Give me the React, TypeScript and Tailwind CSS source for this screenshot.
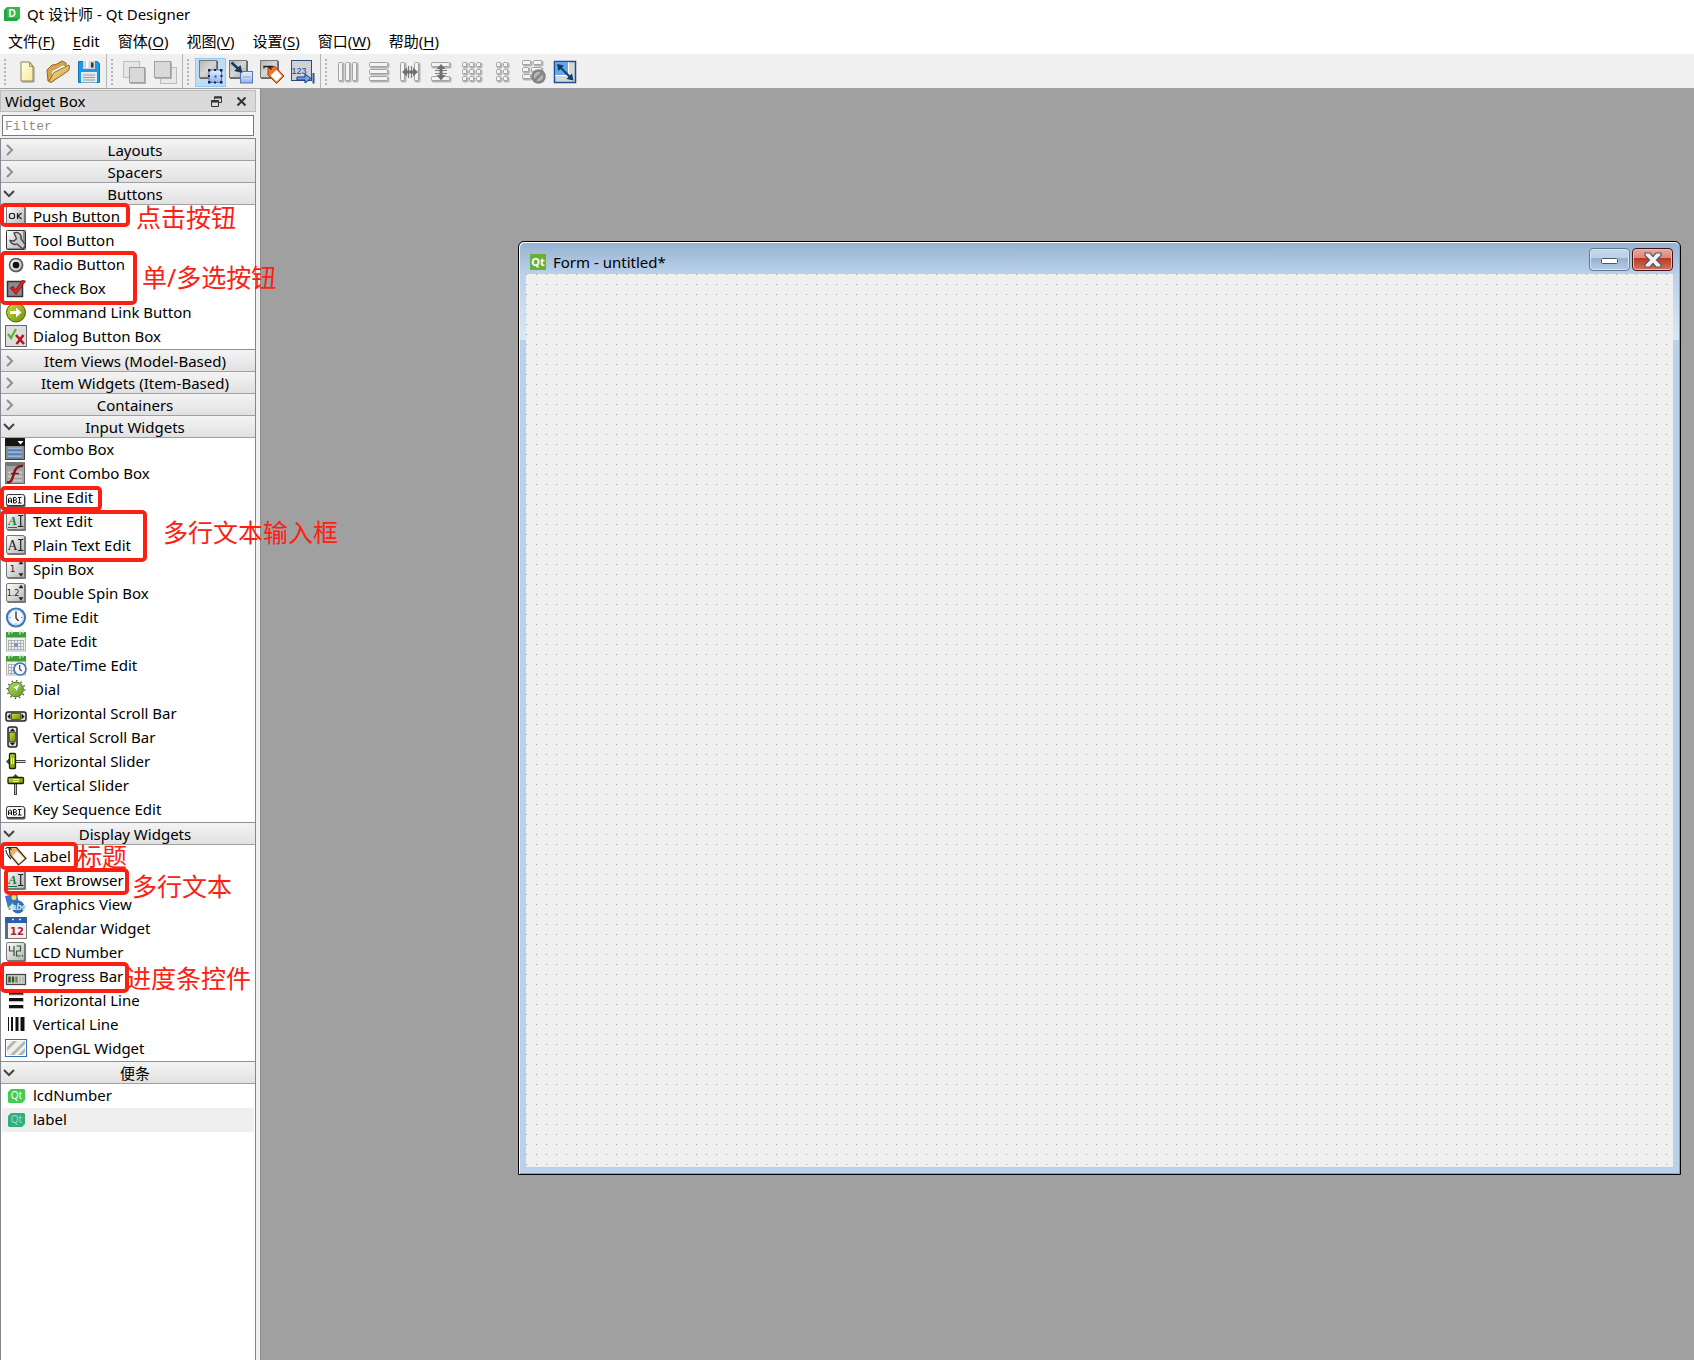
import React from "react";

type Kids = { children?: React.ReactNode };

const Svg = ({ children, size = 22 }: Kids & { size?: number }) => (
  <svg width={size} height={size} viewBox={`0 0 ${size} ${size}`} aria-hidden="true" className="block shrink-0">
    {children}
  </svg>
);

const Defs = () => (
  <svg width="0" height="0" className="absolute" aria-hidden="true">
    <defs>
      <linearGradient id="metal" x1="0" y1="0" x2="1" y2="1">
        <stop offset="0" stopColor="#ffffff" />
        <stop offset="1" stopColor="#b4b4b4" />
      </linearGradient>
      <linearGradient id="plate" x1="0" y1="0" x2="1" y2="1">
        <stop offset="0" stopColor="#b4b4b4" />
        <stop offset="0.5" stopColor="#d6d6d6" />
        <stop offset="1" stopColor="#a8a8a8" />
      </linearGradient>
      <linearGradient id="lime" x1="0" y1="0" x2="1" y2="1">
        <stop offset="0" stopColor="#c6e03c" />
        <stop offset="1" stopColor="#6f8f08" />
      </linearGradient>
      <linearGradient id="knob" x1="0" y1="0" x2="1" y2="1">
        <stop offset="0" stopColor="#b5dc62" />
        <stop offset="1" stopColor="#5f9a1e" />
      </linearGradient>
      <linearGradient id="paper" x1="0" y1="0" x2="1" y2="1">
        <stop offset="0" stopColor="#fffef2" />
        <stop offset="1" stopColor="#fbe98e" />
      </linearGradient>
      <linearGradient id="folder" x1="0" y1="0" x2="1" y2="1">
        <stop offset="0" stopColor="#fbe9a6" />
        <stop offset="1" stopColor="#d09a2c" />
      </linearGradient>
      <linearGradient id="sky" x1="0" y1="0" x2="0" y2="1">
        <stop offset="0" stopColor="#e4efff" />
        <stop offset="1" stopColor="#8fb4ec" />
      </linearGradient>
    </defs>
  </svg>
);

/* ---------- widget icons ---------- */

const Key = ({ children }: Kids) => (
  <>
    <rect x="2" y="2" width="19" height="19" rx="1.5" fill="#777" />
    <rect x="1.5" y="1.5" width="18" height="18" rx="1.5" fill="url(#metal)" stroke="#777" />
    {children}
  </>
);

const Glyph = ({ x, y, s, c = "#222", f = "Liberation Sans", b, i, children }: Kids & { x: number; y: number; s: number; c?: string; f?: string; b?: boolean; i?: boolean }) => (
  <text x={x} y={y} fontSize={s} fill={c} fontFamily={`"${f}", sans-serif`} fontWeight={b ? 700 : 400} fontStyle={i ? "italic" : "normal"} textAnchor="middle">
    {children}
  </text>
);

const PushIcon = () => (
  <Svg>
    <Key>
      <path d="M5.500 8.500h3l1 1v3l-1 1h-3l-1-1v-3zM12.500 8v6M16.500 8l-3.500 3 3.500 3" fill="none" stroke="#222" strokeWidth="1.200" />
    </Key>
  </Svg>
);

const ToolIcon = () => (
  <Svg>
    <rect x="1.500" y="1.500" width="19" height="19" rx="1" fill="#8a8a8a" stroke="#333" />
    <rect x="2" y="2" width="16" height="17" fill="url(#metal)" />
    <path d="M9 4a5 5 0 0 1 7 6l4.500 6-2.500 4-6-5a5 5 0 0 1-7-3.500l4 .5 2.500-2.500z" fill="#c9c9c9" stroke="#444" strokeWidth="1.300" />
  </Svg>
);

const RadioIcon = () => (
  <Svg>
    <circle cx="11.500" cy="12.500" r="7" fill="#aaa" />
    <circle cx="11" cy="12" r="6.500" fill="url(#metal)" stroke="#555" strokeWidth="1.500" />
    <circle cx="11" cy="12" r="3.300" fill="#111" />
  </Svg>
);

const CheckIcon = () => (
  <Svg>
    <rect x="2.500" y="4.500" width="15" height="15" fill="#8c8c8c" stroke="#333" strokeWidth="1.500" />
    <path d="M5 11l3.500-1.500 2 3.500 6.500-9.500 3.500.5-9.500 13.500z" fill="#d8262c" stroke="#7d0c10" strokeWidth="0.800" />
  </Svg>
);

const CommandIcon = () => (
  <Svg>
    <circle cx="11" cy="11.500" r="9.500" fill="url(#lime)" stroke="#4b5a14" />
    <path d="M5 10h6V6.500l5.500 5-5.500 5V13H5z" fill="#fff" />
  </Svg>
);

const DialogIcon = () => (
  <Svg>
    <rect x="0.500" y="0.500" width="21" height="21" fill="#dedede" stroke="#666" />
    <path d="M3 9l3 4 5-9" fill="none" stroke="#57b52b" strokeWidth="2.200" />
    <path d="M11 10l8 9M18.500 10l-7 9" stroke="#b8141c" strokeWidth="2.600" />
  </Svg>
);

const ComboIcon = () => (
  <Svg>
    <rect x="0.500" y="0.500" width="19" height="21" fill="#8b8b8b" stroke="#444" />
    <rect x="0" y="0" width="20" height="8" fill="#161616" />
    <path d="M12.500 3h6l-3 3.500z" fill="#fff" />
    <path d="M3 10.500h14M3 14.500h14M3 18.500h14" stroke="#8db8ec" strokeWidth="2" />
    <path d="M3 12h14M3 16h14M3 20h14" stroke="#355f99" strokeWidth="0.700" />
  </Svg>
);

const FontComboIcon = () => (
  <Svg>
    <rect x="0.500" y="0.500" width="19" height="21" fill="#a3a3a3" stroke="#666" />
    <rect x="0" y="0" width="20" height="4" fill="#777" />
    <path d="M3 10.500h14M3 14.500h14M3 18.500h14" stroke="#c9c9c9" strokeWidth="2" />
    <path d="M2 20c4 1 5-2 6.500-7S11 3.500 18 4" fill="none" stroke="#8e1116" strokeWidth="2.500" />
    <path d="M6 11.500h8" stroke="#8e1116" strokeWidth="1.500" />
  </Svg>
);

const LineEditIcon = () => (
  <Svg>
    <rect x="1.500" y="9.500" width="19" height="12" rx="2" fill="#555" />
    <rect x="1.500" y="8.500" width="18" height="11" rx="2" fill="#f4f4f4" stroke="#333" />
    <path d="M3.500 17v-4l1-1h1l1 1v4M3.500 15h3M8.500 11.500v5.500h2l1-1v-1l-1-.8h-2M10.500 14.200l.8-.7v-1.200l-.8-.8h-2M13 11.500h1.500v5.500H13M16.500 11.500h-2M16.500 17h-2" fill="none" stroke="#111" strokeWidth="1" />
  </Svg>
);

const Cursor = () => <path d="M13 5.500h2l.7.7.7-.7h2M13 16.500h2l.7-.7.7.7h2M15.700 6v10" fill="none" stroke="#222" strokeWidth="1.200" />;

const TextEditIcon = () => (
  <Svg>
    <Key>
      <Glyph x={7.500} y={15} s={13} i c="#1d7a2c" f="Liberation Serif" b>A</Glyph>
      <path d="M3 17.500h9" stroke="#1d7a2c" />
      <Cursor />
    </Key>
  </Svg>
);

const PlainTextIcon = () => (
  <Svg>
    <Key>
      <Glyph x={7.500} y={16} s={14} f="Liberation Serif">A</Glyph>
      <Cursor />
    </Key>
  </Svg>
);

const Arrows = () => <path d="M14 6l2-3 2 3zM14 15.500l2 3 2-3z" fill="#222" stroke="#222" strokeWidth="0.500" />;
const SpinIcon = () => <Svg><Key><Glyph x={7.500} y={14} s={9} f="DejaVu Sans">1</Glyph><Arrows /></Key></Svg>;
const DoubleSpinIcon = () => <Svg><Key><Glyph x={8} y={14} s={8} f="DejaVu Sans">1.2</Glyph><Arrows /></Key></Svg>;

const ClockIcon = () => (
  <Svg>
    <circle cx="11" cy="11.500" r="9" fill="#f4f7fb" stroke="#3b78bf" strokeWidth="2.200" />
    <circle cx="11" cy="11.500" r="7.300" fill="none" stroke="#b9cfe8" strokeWidth="0.800" />
    <path d="M11 5.500v6.500l2.500 3" fill="none" stroke="#333" strokeWidth="1.300" />
    <path d="M11 17v1.500M4.500 11.500H6M16 11.500h1.500" stroke="#888" strokeWidth="0.900" />
  </Svg>
);

const CalendarBase = () => (
  <>
    <rect x="1.500" y="3.500" width="19" height="17.500" fill="#efefef" stroke="#b5b5b5" />
    <rect x="1" y="2" width="20" height="5.500" fill="#3c9e34" />
    <path d="M4 4.500v-3a1.500 1.500 0 0 1 3 0v2M15 4.500v-3a1.500 1.500 0 0 1 3 0v2" fill="none" stroke="#d9e8d7" strokeWidth="1.300" />
    <path d="M3 10.500h16M3 13.500h16M3 16.500h16M3 19.500h16M3.500 10v10M6.500 10v10M9.500 10v10M12.500 10v10M15.500 10v10M18.500 10v10" stroke="#a6a6a6" strokeWidth="0.800" />
  </>
);

const DateIcon = () => <Svg><CalendarBase /><rect x="9.500" y="13.500" width="3" height="3" fill="#5a8de0" /></Svg>;
const DateTimeIcon = () => (
  <Svg>
    <CalendarBase />
    <circle cx="15" cy="15" r="6" fill="#f6f9fc" stroke="#3b78bf" strokeWidth="1.700" />
    <path d="M14.700 11v4.200l2 2" fill="none" stroke="#333" strokeWidth="1.100" />
  </Svg>
);

const DialIcon = () => (
  <Svg>
    <circle cx="11" cy="11.500" r="8.800" fill="none" stroke="#444" strokeWidth="1.600" strokeDasharray="1.200 3.400" />
    <circle cx="11" cy="11.500" r="7.400" fill="url(#knob)" stroke="#4f7a1b" />
    <path d="M14.500 6.500l-3 6.500-1-2.500-2.500-1z" fill="#fff" />
  </Svg>
);

const HScrollIcon = () => (
  <Svg>
    <rect x="1" y="10" width="20" height="9" rx="2" fill="#ddd" stroke="#222" strokeWidth="1.500" />
    <rect x="6.500" y="11.500" width="9" height="6" fill="url(#lime)" stroke="#42510f" strokeWidth="0.800" />
    <path d="M5.500 11.500v6l-3-3zM16.500 11.500v6l3-3z" fill="#111" />
  </Svg>
);

const VScrollIcon = () => (
  <Svg>
    <rect x="3" y="1" width="9" height="20" rx="2" fill="#ddd" stroke="#222" strokeWidth="1.500" />
    <rect x="4.500" y="6.500" width="6" height="9" fill="url(#lime)" stroke="#42510f" strokeWidth="0.800" />
    <path d="M4.500 5.500h6l-3-3zM4.500 16.500h6l-3 3z" fill="#111" />
  </Svg>
);

const HSliderIcon = () => (
  <Svg>
    <path d="M1 11.500l3-3v6zM4 10h16.500v3H4z" fill="#444" />
    <path d="M5 11.500h15" stroke="#ddd" />
    <rect x="4.500" y="3.500" width="6" height="15" rx="1" fill="url(#lime)" stroke="#1d2405" strokeWidth="1.300" />
    <path d="M6.500 8v6M8.500 8v6" stroke="#f2f7cf" />
  </Svg>
);

const VSliderIcon = () => (
  <Svg>
    <path d="M10.500 0l3 3h-6zM9 3h3v18H9z" fill="#444" />
    <path d="M10.500 4v16" stroke="#bbb" />
    <rect x="3" y="3.500" width="15.500" height="6" rx="1" fill="url(#lime)" stroke="#1d2405" strokeWidth="1.300" />
    <path d="M8 5.500h6M8 7.500h6" stroke="#f2f7cf" />
  </Svg>
);

const LabelIcon = () => (
  <Svg>
    <path d="M4 2.500l7.500 0L21 13.500 13.500 20 5 10z" fill="#f0b168" stroke="#3b2a16" strokeWidth="1.200" />
    <path d="M12 6.500l7.500 7-5.500 5L7.500 11z" fill="#fff" />
    <path d="M0.500 4c2-2.500 4-2 6 1M1 5c0 4 2 6 5 9" fill="none" stroke="#222" strokeWidth="1.100" />
  </Svg>
);

const GraphicsIcon = () => (
  <Svg>
    <path d="M0 3l12-2.500 2 10-11 5z" fill="#3d73d8" />
    <path d="M3 13l5-4 6 1-2 4-8 3z" fill="#3b9b3d" />
    <circle cx="9" cy="4.500" r="2.500" fill="#f4dd45" />
    <circle cx="13" cy="14" r="6.500" fill="#336fae" />
    <path d="M3 15l5-5 2 7z" fill="#cfe2fa" />
    <Glyph x={14} y={17} s={9} b i c="#dbe8f6">abc</Glyph>
  </Svg>
);

const CalendarWidgetIcon = () => (
  <Svg>
    <rect x="0.500" y="0.500" width="21" height="21" fill="#f1f1f1" stroke="#777" />
    <rect x="0" y="0" width="22" height="6" fill="#2d5da8" />
    <rect x="0" y="6" width="3" height="16" fill="#5c6c85" />
    <path d="M7 2.500h2M14 2.500h2" stroke="#dce8fa" strokeWidth="1.500" />
    <Glyph x={12} y={18} s={10} b c="#b3222a" f="DejaVu Sans">12</Glyph>
  </Svg>
);

const LcdIcon = () => (
  <Svg>
    <Key>
      <path d="M4.500 5v5h4.500M9 5v10M11.500 5h4v5h-4v5h4M17.500 14v1.500" fill="none" stroke="#2d5a35" strokeWidth="1.200" />
    </Key>
  </Svg>
);

const ProgressIcon = () => (
  <Svg>
    <rect x="1.500" y="9.500" width="19" height="10" fill="#d6d6d6" stroke="#444" strokeWidth="1.300" />
    <path d="M4.500 11.500v6M8 11.500v6" stroke="#33581c" strokeWidth="2.500" />
    <path d="M11.500 11.500v6" stroke="#6e8a5d" strokeWidth="2.500" />
    <path d="M15 11.500v6M18 11.500v6" stroke="#a9b5a2" strokeWidth="1.500" />
  </Svg>
);

const HLineIcon = () => <Svg><path d="M4 4.500h15M4 11h15M4 18h15" stroke="#bbb" strokeWidth="4" /><path d="M4 4h14M4 10.500h14M4 17.500h14" stroke="#111" strokeWidth="3" /></Svg>;
const VLineIcon = () => (
  <Svg>
    <path d="M3.500 4v14" stroke="#111" />
    <path d="M7 4v14" stroke="#111" strokeWidth="2" />
    <path d="M12 4v14" stroke="#111" strokeWidth="3" />
    <path d="M17.500 4v14" stroke="#111" strokeWidth="4" />
  </Svg>
);

const OpenGLIcon = () => (
  <Svg>
    <rect x="0.500" y="2.500" width="21" height="17" fill="#fff" stroke="#2f6fc0" />
    <path d="M2 4h18v14H2z" fill="#f0f0ea" />
    <path d="M2 10l6-6h4L2 14zM5 18L19 4h1v3L9 18zM13 18l7-7v4l-3 3z" fill="#b5b5b5" />
  </Svg>
);

const QtLeaf = ({ tone, ink }: { tone: string; ink: string }) => (
  <Svg>
    <path d="M6 5h13l1 1v10l-3 3H4l-1-1V8z" fill={tone} />
    <Glyph x={11.500} y={15} s={10} c={ink} f="Noto Sans">Qt</Glyph>
  </Svg>
);

/* ---------- toolbar icons ---------- */

const NewIcon = () => (
  <Svg size={24}>
    <path d="M6 2h8.500l3.500 4v15H6z" fill="url(#paper)" stroke="#8f8150" />
    <path d="M14.500 2v4.500h3.500z" fill="#f0df95" stroke="#8f8150" strokeWidth="0.800" />
    <path d="M7 22h12V7" fill="none" stroke="#777" strokeWidth="0.800" />
  </Svg>
);

const OpenIcon = () => (
  <Svg size={24}>
    <path d="M1 10l5-5 4-.5 6-3.500 4 2v6L6 22l-4-1z" fill="#d9a640" stroke="#8a6a20" />
    <path d="M6 11l11-6 3 1-3 8-12 6z" fill="#fff" stroke="#9c9c9c" strokeWidth="0.700" />
    <path d="M3 21.500l5-9 15-7.500c.8 2 .3 5-1 6L5 22.500z" fill="url(#folder)" stroke="#8a6a20" />
  </Svg>
);

const SaveIcon = () => (
  <Svg size={24}>
    <path d="M1.500 1.500h19l2 2v19h-21z" fill="#1a9be6" stroke="#0f76bd" />
    <rect x="6" y="1" width="12" height="8" fill="#d6d6d6" />
    <rect x="9" y="1" width="2.500" height="7" fill="#fff" />
    <rect x="14" y="2.500" width="2.500" height="5" fill="#333" />
    <rect x="4" y="12" width="16" height="10.500" fill="#e8e8e8" />
    <path d="M6 15h12M6 17.500h12M6 20h12" stroke="#999" />
  </Svg>
);

const BackIcon = () => (
  <Svg size={24}>
    <rect x="1.500" y="1.500" width="16" height="16" fill="#e6e6e6" stroke="#bdbdbd" />
    <rect x="8" y="8" width="16" height="16" fill="#b0b0b0" />
    <rect x="7.500" y="7.500" width="15" height="15" fill="#d9d9d9" stroke="#a0a0a0" />
  </Svg>
);

const FrontIcon = () => (
  <Svg size={24}>
    <rect x="7.500" y="7.500" width="16" height="16" fill="#e9e9e9" stroke="#bdbdbd" />
    <rect x="2" y="2" width="17" height="17" fill="#b0b0b0" />
    <rect x="1.500" y="1.500" width="16" height="16" fill="#d9d9d9" stroke="#a0a0a0" />
  </Svg>
);

const Plate = () => (
  <>
    <rect x="1" y="1" width="18" height="18" fill="#666" />
    <rect x="0.500" y="0.500" width="17" height="17" fill="url(#plate)" stroke="#777" />
  </>
);

const EditWidgetsIcon = () => (
  <Svg size={24}>
    <Plate />
    <rect x="10" y="10" width="12.500" height="12.500" fill="url(#sky)" stroke="#5d78b0" strokeWidth="1" />
    <path d="M9 9h2.500v2.500H9zM15 9h2v2h-2zM21 9h2.500v2.500H21zM9 15h2v2H9zM21.500 15h2v2h-2zM9 21h2.500v2.500H9zM15 21.500h2v2h-2zM21 21h2.500v2.500H21z" fill="#15234f" />
    <rect x="15.500" y="15.500" width="2" height="2" fill="#244ba0" />
  </Svg>
);

const SignalsIcon = () => (
  <Svg size={24}>
    <Plate />
    <rect x="11.500" y="11.500" width="12" height="11.500" fill="url(#sky)" stroke="#5878ac" />
    <path d="M14 17h7" stroke="#fff" strokeWidth="2.500" />
    <path d="M14 17h7" stroke="#5a7cb8" />
    <path d="M2.500 2.500l7.500 7" stroke="#173d60" strokeWidth="2.500" />
    <path d="M13.500 13l-8.500-2 6.500-6z" fill="#173d60" />
  </Svg>
);

const BuddiesIcon = () => (
  <Svg size={24}>
    <Plate />
    <path d="M8 7.500l7-1L24 16l-7.500 7.500-8.500-8.500z" fill="#f17627" stroke="#9f3c0c" />
    <path d="M16.500 10l5.500 6-5.500 5.500-6-6z" fill="#fff" />
    <path d="M4 8.500V6.500h9M8.500 6.500l3 3" fill="none" stroke="#222" strokeWidth="1.300" />
  </Svg>
);

const TabOrderIcon = () => (
  <Svg size={24}>
    <rect x="0.500" y="0.500" width="20" height="20" fill="#d2d2d2" stroke="#2d4c7c" />
    <Glyph x={8} y={14} s={9} c="#1c3f94">123</Glyph>
    <path d="M6 17h8v-3l6 4.500-6 4.500v-3H6z" fill="#6ba5f0" stroke="#173d78" />
    <path d="M22.500 13v10.500" stroke="#2456a4" strokeWidth="2" />
  </Svg>
);

const Cell = ({ x, y, w, h }: { x: number; y: number; w: number; h: number }) => (
  <>
    <rect x={x + 1} y={y + 1} width={w + 1} height={h + 1} rx="1" fill="#b4b4b4" stroke="#b4b4b4" />
    <rect x={x + 0.5} y={y + 0.5} width={w} height={h} rx="1" fill="#f4f4f4" stroke="#a2a2a2" />
  </>
);

const LayHIcon = () => <Svg size={24}><Cell x={2} y={2} w={4} h={18} /><Cell x={9} y={2} w={4} h={18} /><Cell x={16} y={2} w={4} h={18} /></Svg>;
const LayVIcon = () => <Svg size={24}><Cell x={2} y={2} w={18} h={4} /><Cell x={2} y={9} w={18} h={4} /><Cell x={2} y={16} w={18} h={4} /></Svg>;
const SplitHIcon = () => (
  <Svg size={24}>
    <Cell x={2} y={2} w={4} h={18} /><Cell x={16} y={2} w={4} h={18} />
    <path d="M10.500 6v12M13.500 6v12" stroke="#7d7d7d" strokeWidth="1.200" />
    <path d="M4 12l5-4.500v3h6v-3l5 4.500-5 4.500v-3H9v3z" fill="#707070" />
  </Svg>
);
const SplitVIcon = () => (
  <Svg size={24}>
    <Cell x={2} y={2} w={18} h={4} /><Cell x={2} y={16} w={18} h={4} />
    <path d="M6 10.500h12M6 13.500h12" stroke="#7d7d7d" strokeWidth="1.200" />
    <path d="M12 4l4.500 5h-3v6h3L12 20.500 7.500 15h3V9h-3z" fill="#707070" />
  </Svg>
);
const LayGridIcon = () => (
  <Svg size={24}>
    {[2, 9, 16].map((y) => [2, 9, 16].map((x) => <Cell key={`${x}-${y}`} x={x} y={y} w={4} h={4} />))}
  </Svg>
);
const LayFormIcon = () => (
  <Svg size={24}>
    {[2, 9, 16].map((y) => [5, 12].map((x) => <Cell key={`${x}-${y}`} x={x} y={y} w={4} h={4} />))}
  </Svg>
);
const BreakIcon = () => (
  <Svg size={24}>
    <Cell x={0} y={0} w={8} h={4} /><Cell x={11} y={0} w={8} h={4} />
    <Cell x={0} y={7} w={6} h={4} /><Cell x={9} y={7} w={10} h={4} />
    <Cell x={0} y={14} w={8} h={4} />
    <circle cx="16.500" cy="16.500" r="6" fill="#b5b5b5" stroke="#858585" strokeWidth="2.500" />
    <path d="M12.500 20.500l8-8" stroke="#858585" strokeWidth="2.500" />
  </Svg>
);
const AdjustIcon = () => (
  <Svg size={24}>
    <rect x="1.500" y="1.500" width="21" height="21" fill="#d7d7d7" stroke="#1d4e8f" strokeWidth="1.500" />
    <rect x="2" y="2" width="13" height="13" fill="#62a8ea" />
    <path d="M2 15.500h13.500V2" fill="none" stroke="#fff" />
    <path d="M7 7l10 10" stroke="#0c3f66" strokeWidth="2" />
    <path d="M4 4l7 1.500L5.500 11zM20.500 20.500L13.500 19l5.500-5.500z" fill="#0c3f66" />
  </Svg>
);

/* ---------- data ---------- */

type Item = { name: string; icon: React.ReactNode; on?: boolean };
type Section = { title: string; items?: Item[]; last?: boolean };

const sections: Section[] = [
  { title: "Layouts" },
  { title: "Spacers" },
  {
    title: "Buttons",
    items: [
      { name: "Push Button", icon: <PushIcon /> },
      { name: "Tool Button", icon: <ToolIcon /> },
      { name: "Radio Button", icon: <RadioIcon /> },
      { name: "Check Box", icon: <CheckIcon /> },
      { name: "Command Link Button", icon: <CommandIcon /> },
      { name: "Dialog Button Box", icon: <DialogIcon /> },
    ],
  },
  { title: "Item Views (Model-Based)" },
  { title: "Item Widgets (Item-Based)" },
  { title: "Containers" },
  {
    title: "Input Widgets",
    items: [
      { name: "Combo Box", icon: <ComboIcon /> },
      { name: "Font Combo Box", icon: <FontComboIcon /> },
      { name: "Line Edit", icon: <LineEditIcon /> },
      { name: "Text Edit", icon: <TextEditIcon /> },
      { name: "Plain Text Edit", icon: <PlainTextIcon /> },
      { name: "Spin Box", icon: <SpinIcon /> },
      { name: "Double Spin Box", icon: <DoubleSpinIcon /> },
      { name: "Time Edit", icon: <ClockIcon /> },
      { name: "Date Edit", icon: <DateIcon /> },
      { name: "Date/Time Edit", icon: <DateTimeIcon /> },
      { name: "Dial", icon: <DialIcon /> },
      { name: "Horizontal Scroll Bar", icon: <HScrollIcon /> },
      { name: "Vertical Scroll Bar", icon: <VScrollIcon /> },
      { name: "Horizontal Slider", icon: <HSliderIcon /> },
      { name: "Vertical Slider", icon: <VSliderIcon /> },
      { name: "Key Sequence Edit", icon: <LineEditIcon /> },
    ],
  },
  {
    title: "Display Widgets",
    items: [
      { name: "Label", icon: <LabelIcon /> },
      { name: "Text Browser", icon: <TextEditIcon /> },
      { name: "Graphics View", icon: <GraphicsIcon /> },
      { name: "Calendar Widget", icon: <CalendarWidgetIcon /> },
      { name: "LCD Number", icon: <LcdIcon /> },
      { name: "Progress Bar", icon: <ProgressIcon /> },
      { name: "Horizontal Line", icon: <HLineIcon /> },
      { name: "Vertical Line", icon: <VLineIcon /> },
      { name: "OpenGL Widget", icon: <OpenGLIcon /> },
    ],
  },
  {
    title: "便条",
    last: true,
    items: [
      { name: "lcdNumber", icon: <QtLeaf tone="#41cd52" ink="#ffffff" /> },
      { name: "label", icon: <QtLeaf tone="#2fb17c" ink="#9fd8dc" />, on: true },
    ],
  },
];

const menus: [string, string, string][] = [
  ["文件(", "F", ")"],
  ["", "E", "dit"],
  ["窗体(", "O", ")"],
  ["视图(", "V", ")"],
  ["设置(", "S", ")"],
  ["窗口(", "W", ")"],
  ["帮助(", "H", ")"],
];

const tools: { label: string; icon: React.ReactNode; on?: boolean }[][] = [
  [
    { label: "New", icon: <NewIcon /> },
    { label: "Open", icon: <OpenIcon /> },
    { label: "Save", icon: <SaveIcon /> },
  ],
  [
    { label: "Send to back", icon: <BackIcon /> },
    { label: "Bring to front", icon: <FrontIcon /> },
  ],
  [
    { label: "Edit widgets", icon: <EditWidgetsIcon />, on: true },
    { label: "Edit signals/slots", icon: <SignalsIcon /> },
    { label: "Edit buddies", icon: <BuddiesIcon /> },
    { label: "Edit tab order", icon: <TabOrderIcon /> },
  ],
  [
    { label: "Lay out horizontally", icon: <LayHIcon /> },
    { label: "Lay out vertically", icon: <LayVIcon /> },
    { label: "Horizontal splitter", icon: <SplitHIcon /> },
    { label: "Vertical splitter", icon: <SplitVIcon /> },
    { label: "Lay out in a grid", icon: <LayGridIcon /> },
    { label: "Lay out in a form", icon: <LayFormIcon /> },
    { label: "Break layout", icon: <BreakIcon /> },
    { label: "Adjust size", icon: <AdjustIcon /> },
  ],
];

const frames = [
  "-left-px top-[64px] w-[130px] h-[24px]",
  "-left-px top-[112px] w-[137px] h-[54px]",
  "-left-px top-[347px] w-[102px] h-[25px]",
  "-left-px top-[371px] w-[147px] h-[52px]",
  "-left-px top-[703px] w-[78px] h-[28px]",
  "left-[3px] top-[729px] w-[125px] h-[27px]",
  "-left-px top-[823px] w-[129px] h-[31px]",
];

const notes: [string, string][] = [
  ["点击按钮", "left-[135px] top-[66px]"],
  ["单/多选按钮", "left-[141px] top-[126px]"],
  ["多行文本输入框", "left-[162px] top-[381px]"],
  ["标题", "left-[76px] top-[705px]"],
  ["多行文本", "left-[131px] top-[735px]"],
  ["进度条控件", "left-[125px] top-[827px]"],
];

/* ---------- parts ---------- */

const Chevron = ({ open }: { open: boolean }) => (
  <svg width="12" height="12" viewBox="0 0 12 12" fill="none" aria-hidden="true" className="absolute left-0.5 top-[5px]">
    {open ? <path d="M1 3l5 5 5-5" stroke="#444" strokeWidth="2" /> : <path d="M4 1l5 5-5 5" stroke="#8f8f8f" strokeWidth="2" />}
  </svg>
);

const SectionView = ({ title, items, last }: Section) => (
  <section>
    <h3>
      <button className="relative flex h-[22px] w-full items-center justify-center border-b border-[#a0a0a0] bg-linear-to-b from-[#f4f4f4] to-[#e1e1e1] pl-3.5 leading-5">
        <Chevron open={!!items} />
        {title}
      </button>
    </h3>
    {items && (
      <ul className={last ? "" : "border-b border-[#8e8f94]"}>
        {items.map((it) => (
          <li key={it.name} className="px-px">
            <button className={`flex h-6 w-full items-center gap-1.5 pb-0.5 pl-[3px] text-left leading-5 ${it.on ? "bg-[#efefef]" : ""}`}>
              {it.icon}
              {it.name}
            </button>
          </li>
        ))}
      </ul>
    )}
  </section>
);

const WidgetBox = () => (
  <aside className="flex w-[260px] shrink-0 flex-col bg-[#f0f0f0] pr-1 pt-px">
    <header className="flex h-[22px] items-center border border-[#bcbcbc] bg-[#dadada] pl-1 pr-2">
      <h2 className="flex-1 leading-5">Widget Box</h2>
      <button aria-label="Float" className="mr-3.5">
        <svg width="11" height="11" viewBox="0 0 11 11" fill="none" className="block" aria-hidden="true">
          <path d="M3.500 3.500V1h7v5.500H8" stroke="#333" />
          <path d="M3 1.500h8" stroke="#333" strokeWidth="2" />
          <path d="M.5 4.500H7.500V10.500H.5z" stroke="#333" />
          <path d="M0 5.500h8" stroke="#333" strokeWidth="2" />
        </svg>
      </button>
      <button aria-label="Close">
        <svg width="11" height="11" viewBox="0 0 11 11" fill="none" className="block" aria-hidden="true">
          <path d="M1.500 1.500l8 8M9.500 1.500l-8 8" stroke="#333" strokeWidth="2" />
        </svg>
      </button>
    </header>
    <div className="px-0.5 pb-0.5 pt-[3px]">
      <input
        aria-label="Filter"
        placeholder="Filter"
        className="block h-[21px] w-full border border-[#7a7a7a] bg-white px-0.5 pt-0.5 font-['Liberation_Mono',monospace] text-[13px] outline-none placeholder:text-[#8c8c8c]"
      />
    </div>
    <div className="relative flex-1 border-x border-t border-[#828790] bg-white">
      {sections.map((s) => (
        <SectionView key={s.title} {...s} />
      ))}
      {frames.map((f) => (
        <div key={f} className={`pointer-events-none absolute z-10 rounded-[5px] border-4 border-[#fd2012] ${f}`} />
      ))}
      {notes.map(([text, place]) => (
        <p key={text} className={`pointer-events-none absolute z-10 whitespace-nowrap text-[25px] leading-6 text-[#fd2012] ${place}`}>
          {text}
        </p>
      ))}
    </div>
  </aside>
);

const FormWindow = () => (
  <section className="absolute left-[257px] right-[13px] top-[152px] flex h-[934px] flex-col rounded-t-[6px] border border-black bg-[#b9d1ea] shadow-[inset_1px_1px_0_#fff,inset_-1px_-1px_0_#3cc4dc]">
    <header className="m-px mb-0 flex h-[31px] items-center rounded-t-[5px] bg-linear-to-b from-[#98b3d1] to-[#b9d1ea] pl-2.5 pr-1.5 pt-0.5">
      <svg width="16" height="16" viewBox="0 0 16 16" className="mr-[7px] mt-1 block" aria-hidden="true">
        <rect width="16" height="16" fill="#66b036" />
        <Glyph x={8} y={12} s={11} b c="#fff" f="Noto Sans">Qt</Glyph>
      </svg>
      <h2 className="mt-1 flex-1 leading-5">Form - untitled*</h2>
      <button aria-label="Minimize" className="mr-0.5 flex h-[23px] w-[41px] items-center justify-center rounded-sm border border-[#5f7896] bg-[linear-gradient(#c3d5ea_0%,#bcd0e8_45%,#98b1ce_45%,#b4cbe5_100%)] pt-1 shadow-[inset_0_0_0_1px_#d6e4f3]">
        <svg width="17" height="7" viewBox="0 0 17 7" aria-hidden="true">
          <rect x="0.500" y="0.500" width="16" height="5" rx="1" fill="#fff" stroke="#535666" />
        </svg>
      </button>
      <button aria-label="Close form" className="flex h-[23px] w-[41px] items-center justify-center rounded-sm border border-[#43141d] bg-[linear-gradient(#e8a99c_0%,#d98676_45%,#b83a22_45%,#d4745c_100%)] shadow-[inset_0_0_0_1px_#eebbb0]">
        <svg width="18" height="16" viewBox="0 0 18 16" aria-hidden="true">
          <path d="M1 1h5l3 3.500L12 1h5v2.500L12.500 8l4.500 4.500V15h-5L9 11.500 6 15H1v-2.500L5.500 8 1 3.500z" fill="#f3f3f3" stroke="#535666" strokeWidth="1.200" />
        </svg>
      </button>
    </header>
    <div className="relative flex-1 px-[7px] pb-[7px]">
      <div className="absolute inset-x-px top-0 h-[66px] bg-linear-to-b from-[#b9d1ea] to-[#dbe8f5]" />
      <div className="relative h-full bg-[linear-gradient(to_bottom,transparent_1px,#f0f0f0_1px),linear-gradient(to_right,#9d9d9d_1px,#f0f0f0_1px)] bg-size-[10px_10px]" />
    </div>
  </section>
);

export default function App() {
  return (
    <div className="flex min-h-screen flex-col bg-[#f0f0f0] font-['Noto_Sans','Noto_Sans_CJK_SC',sans-serif] text-[15px] text-black">
      <Defs />
      <header className="flex h-7 items-center gap-[7px] bg-white pl-1">
        <svg width="16" height="16" viewBox="0 0 16 16" aria-hidden="true">
          <path d="M3 1h13v11l-3 3H0V4z" fill="#21a73c" />
          <path d="M3 1h13v11H3z" fill="#35bb4b" />
          <Glyph x={8} y={11} s={10} b c="#fff">D</Glyph>
        </svg>
        <h1 className="leading-5">Qt 设计师 - Qt Designer</h1>
      </header>
      <nav className="flex h-[26px] items-center gap-0.5 bg-white">
        {menus.map(([a, key, b]) => (
          <button key={key} className="px-2 leading-5">
            {a}
            <span className="underline underline-offset-2">{key}</span>
            {b}
          </button>
        ))}
      </nav>
      <div className="flex h-[35px] border-b border-[#a0a0a0]">
        {tools.map((group, i) => (
          <div key={i} className={`flex items-center pl-1 pr-px pt-0.5 ${i < 3 ? "border-r border-[#b4b4b4]" : ""}`}>
            <span className="mr-1.5 h-[26px] w-0.5 bg-[linear-gradient(#b5b5b5_50%,transparent_50%)] bg-size-[2px_4px]" />
            {group.map((t) => (
              <button
                key={t.label}
                aria-label={t.label}
                className={`flex h-[29px] w-[31px] items-center justify-center border ${t.on ? "border-[#90c8f6] bg-[#c0dcf3]" : "border-transparent pr-0.5"}`}
              >
                {t.icon}
              </button>
            ))}
          </div>
        ))}
      </div>
      <main className="flex flex-1">
        <WidgetBox />
        <div className="relative flex-1 border-l border-[#8c8c8c] bg-[#a0a0a0]">
          <FormWindow />
        </div>
      </main>
    </div>
  );
}
